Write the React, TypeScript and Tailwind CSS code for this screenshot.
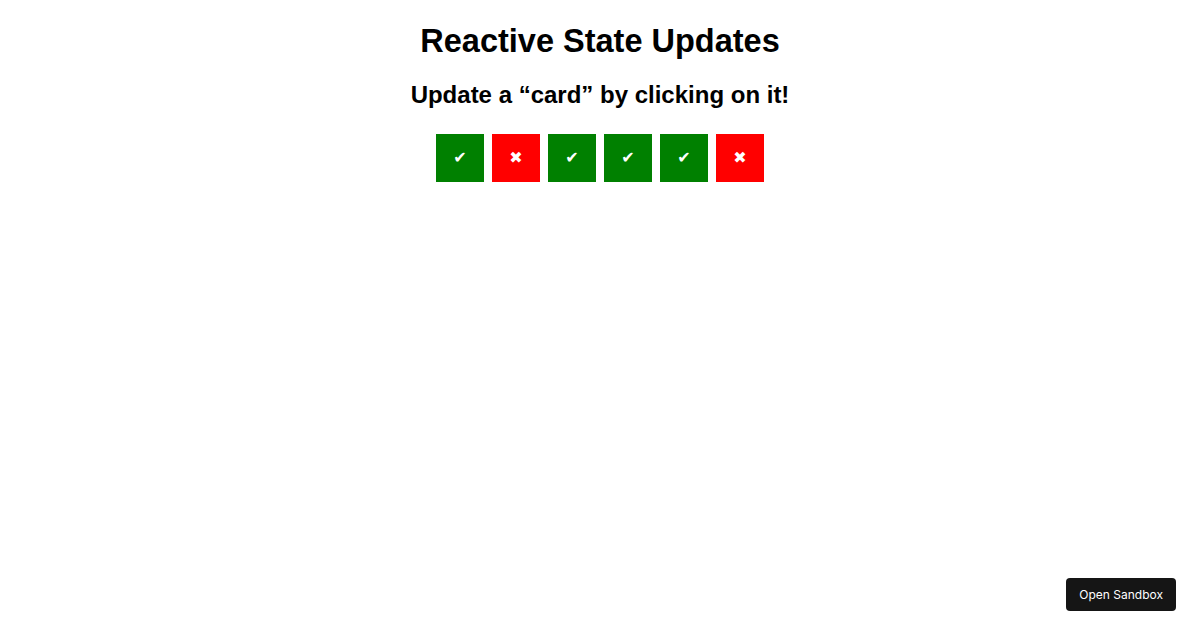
import { useState } from 'react'

const initial = [true, false, true, true, true, false]

export default function App() {
  const [cards, setCards] = useState(initial)

  const toggle = (i: number) =>
    setCards(c => c.map((v, j) => (j === i ? !v : v)))

  return (
    <div className="relative min-h-[630px] bg-white text-black font-['Liberation_Sans',Arial,sans-serif]">
      <div className="flex flex-col items-center">
        <h1 className="mt-[22px] text-[32.5px] leading-[38px] font-bold">Reactive State Updates</h1>
        <h2 className="mt-[21px] text-[24px] leading-[28px] font-bold">Update a “card” by clicking on it!</h2>

        {/* Cards */}
        <div className="mt-[25px] flex gap-2">
          {cards.map((ok, i) => (
            <button
              key={i}
              onClick={() => toggle(i)}
              className={`h-12 w-12 flex items-center justify-center text-white text-[16px] font-['DejaVu_Sans',sans-serif] ${ok ? 'bg-[#008000]' : 'bg-[#ff0000]'}`}
            >
              {ok ? '✔' : '✖'}
            </button>
          ))}
        </div>
      </div>

      <button className="absolute right-6 bottom-[19px] h-[33px] px-[13px] rounded-[4px] bg-[#151515] text-white text-[12px] font-['Inter',sans-serif]">
        Open Sandbox
      </button>
    </div>
  )
}
